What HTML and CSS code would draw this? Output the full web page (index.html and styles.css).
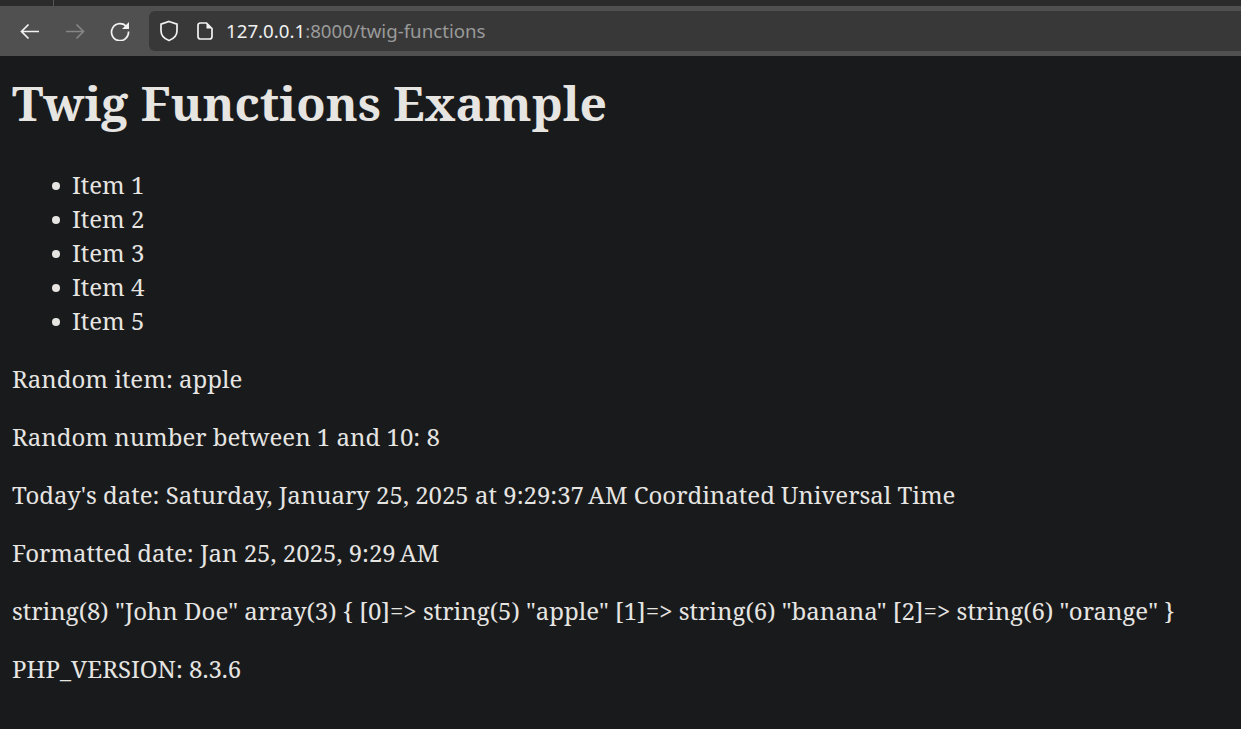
FILE: index.html
```html
<!DOCTYPE html>
<html lang="en">
<head>
    <meta charset="UTF-8">
    <title>Twig Functions</title>
    <link rel="stylesheet" href="styles.css">
</head>
<body>

    <div class="tab-strip"><span class="tab-edge"></span></div>

    <div class="toolbar">
        <button class="nav-button" type="button" aria-label="Back">
            <svg width="20" height="20" viewBox="0 0 20 20"><path d="M19 10.500H1.500M8.500 3.500L1.500 10.500l7 7" /></svg>
        </button>
        <button class="nav-button nav-disabled" type="button" aria-label="Forward">
            <svg width="20" height="20" viewBox="0 0 20 20"><path d="M1 10.500h17.500M11.500 3.500l7 7-7 7" /></svg>
        </button>
        <button class="nav-button" type="button" aria-label="Reload">
            <svg width="20" height="20" viewBox="0 0 20 20"><path d="M16.600 5.800A8.500 8.500 0 1 0 18.500 10.500" /><path class="solid" d="M19 1v7h-7z" /></svg>
        </button>

        <div class="url-bar">
            <svg class="url-icon" width="20" height="22" viewBox="0 0 20 22"><path d="M10 1.500l8 2.700v6.500c0 4.600-3 7.900-8 9.800-5-1.900-8-5.200-8-9.800V4.200z" /></svg>
            <svg class="url-icon" width="16" height="18" viewBox="0 0 16 18"><path d="M3 1h6.500L15 6.500V14.500a2.500 2.500 0 0 1-2.500 2.500h-9.500a2.500 2.500 0 0 1-2-2.500V3.500A2.500 2.500 0 0 1 3 1z" /><path class="solid" d="M9.500 1l5.500 5.500h-5.500z" /></svg>
            <span class="url-text">127.0.0.1<span class="url-muted">:8000/twig-functions</span></span>
        </div>
    </div>

    <div class="page">
        <h1>Twig Functions Example</h1>

        <ul>
            <li>Item 1</li>
            <li>Item 2</li>
            <li>Item 3</li>
            <li>Item 4</li>
            <li>Item 5</li>
        </ul>

        <p>Random item: apple</p>
        <p>Random number between 1 and 10: 8</p>
        <p>Today's date: Saturday, January 25, 2025 at 9:29:37&#8239;AM Coordinated Universal Time</p>
        <p>Formatted date: Jan 25, 2025, 9:29&#8239;AM</p>
        <p>string(8) "John Doe" array(3) { [0]=&gt; string(5) "apple" [1]=&gt; string(6) "banana" [2]=&gt; string(6) "orange" }</p>
        <p>PHP_VERSION: 8.3.6</p>
    </div>

</body>
</html>
```

FILE: styles.css
```css
* {
    margin: 0;
    padding: 0;
    box-sizing: border-box;
}

html,
body {
    height: 100%;
    overflow: hidden;
}

body {
    background: #191a1c;
    display: flex;
    flex-direction: column;
}

.tab-strip {
    height: 6px;
    background: #2b2b2b;
    padding-left: 53px;
}

.tab-edge {
    display: block;
    width: 1px;
    height: 6px;
    background: #555;
}

.toolbar {
    height: 50px;
    background: #505050;
    display: flex;
    align-items: center;
    padding-left: 8px;
}

.nav-button {
    width: 44px;
    height: 40px;
    margin-right: 1px;
    background: none;
    border: none;
    display: flex;
    align-items: center;
    justify-content: center;
}

.nav-button svg,
.url-icon {
    fill: none;
    stroke: #f2f2f2;
    stroke-width: 1.7;
}

.nav-button .solid,
.url-icon .solid {
    fill: #f2f2f2;
    stroke: none;
}

.nav-disabled svg {
    stroke: #858585;
}

.url-bar {
    flex: 1;
    height: 40px;
    margin-left: 6px;
    background: #383838;
    border-radius: 6px 0 0 6px;
    display: flex;
    align-items: center;
    padding-left: 10px;
    gap: 18px;
}

.url-text {
    font-family: "Noto Sans", sans-serif;
    font-size: 18.7px;
    color: #f0f0f0;
    margin-left: -5px;
    margin-bottom: 2px;
}

.url-muted {
    color: #9a9a9a;
}

.page {
    flex: 1;
    padding: 12px;
    font-family: "Noto Serif", "DejaVu Serif", serif;
    font-size: 24px;
    line-height: 34px;
    color: #e6e5e2;
}

.page h1 {
    font-size: 48px;
    font-weight: 700;
    line-height: 70px;
    margin-bottom: 30px;
}

.page ul {
    list-style: none;
    padding-left: 60px;
    margin-bottom: 24px;
}

.page li::before {
    content: "";
    display: inline-block;
    width: 8px;
    height: 8px;
    margin-left: -20px;
    margin-right: 12px;
    vertical-align: 4px;
    border-radius: 50%;
    background: #e6e5e2;
}

.page p {
    margin-bottom: 24px;
}
```
